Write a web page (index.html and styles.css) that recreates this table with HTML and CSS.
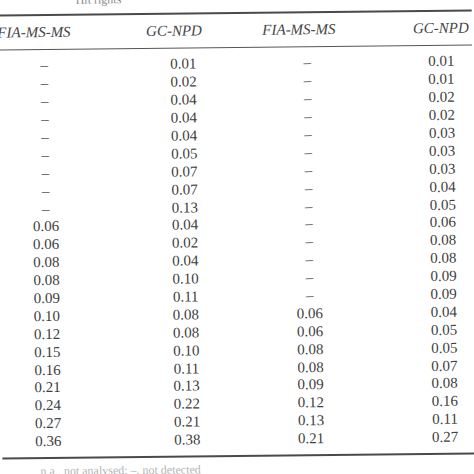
FILE: index.html
```html
<!DOCTYPE html>
<html>
<head>
<meta charset="utf-8">
<link rel="stylesheet" href="styles.css">
</head>
<body>
<div class="page">
  <div class="caption">Hit rights</div>
  <div class="rule top"></div>
  <div class="grid head">
    <div class="cell h1">FIA-MS-MS</div>
    <div class="cell h2">GC-NPD</div>
    <div class="cell h3">FIA-MS-MS</div>
    <div class="cell h4">GC-NPD</div>
  </div>
  <div class="rule mid"></div>
  <div class="grid rows" id="rows"></div>
  <div class="rule bot"></div>
  <div class="foot">n.a., not analysed; –, not detected</div>
</div>
<script>
const data = [
["–","0.01","–","0.01"],["–","0.02","–","0.01"],["–","0.04","–","0.02"],["–","0.04","–","0.02"],
["–","0.04","–","0.03"],["–","0.05","–","0.03"],["–","0.07","–","0.03"],["–","0.07","–","0.04"],
["–","0.13","–","0.05"],["0.06","0.04","–","0.06"],["0.06","0.02","–","0.08"],["0.08","0.04","–","0.08"],
["0.08","0.10","–","0.09"],["0.09","0.11","–","0.09"],["0.10","0.08","0.06","0.04"],["0.12","0.08","0.06","0.05"],
["0.15","0.10","0.08","0.05"],["0.16","0.11","0.08","0.07"],["0.21","0.13","0.09","0.08"],["0.24","0.22","0.12","0.16"],
["0.27","0.21","0.13","0.11"],["0.36","0.38","0.21","0.27"]];
const g = document.getElementById('rows');
data.forEach(r => r.forEach((v,i) => {
  const d = document.createElement('div');
  d.className = 'cell c' + (i + 1) + (v === '–' ? ' dash' : '');
  d.textContent = v;
  g.appendChild(d);
}));
</script>
</body>
</html>
```
FILE: styles.css
```css
html, body {
  margin: 0;
  padding: 0;
  background: #fff;
  width: 474px;
  height: 474px;
  overflow: hidden;
}
.page {
  width: 474px;
  height: 474px;
  font-family: "Liberation Serif", "Times New Roman", serif;
  color: #404040;
  transform: rotate(-0.6deg);
  transform-origin: 237px 237px;
}
.caption {
  margin-top: -8px;
  height: 12px;
  line-height: 12px;
  font-size: 12px;
  color: #8a8a8a;
  padding-left: 78px;
  white-space: nowrap;
}
.rule {
  width: 474px;
  height: 0;
  border-top: 2px solid #4a4a4a;
}
.rule.top { margin-top: 8px; }
.rule.mid { border-top-width: 1.5px; border-color: #555; }
.rule.bot { margin-top: 6px; }
.grid {
  display: grid;
  grid-template-columns: 92px 186px 62px 134px;
  width: 474px;
}
.cell {
  display: flex;
  justify-content: center;
  align-items: center;
  white-space: nowrap;
  font-size: 15px;
}
.head {
  height: 33px;
  font-style: italic;
  color: #464646;
}
.h1 { padding-right: 20px; }
.h2 { padding-right: 18px; }
.h3 { padding-right: 16px; }
.h4 { padding-left: 72px; }
.c4 { padding-left: 72px; }
.rows {
  padding-top: 7px;
  grid-auto-rows: 17.9px;
}
.dash { color: #555; }
.foot {
  margin-top: 5px;
  padding-left: 38px;
  font-size: 12px;
  color: #b5b5b5;
  white-space: nowrap;
}
```
